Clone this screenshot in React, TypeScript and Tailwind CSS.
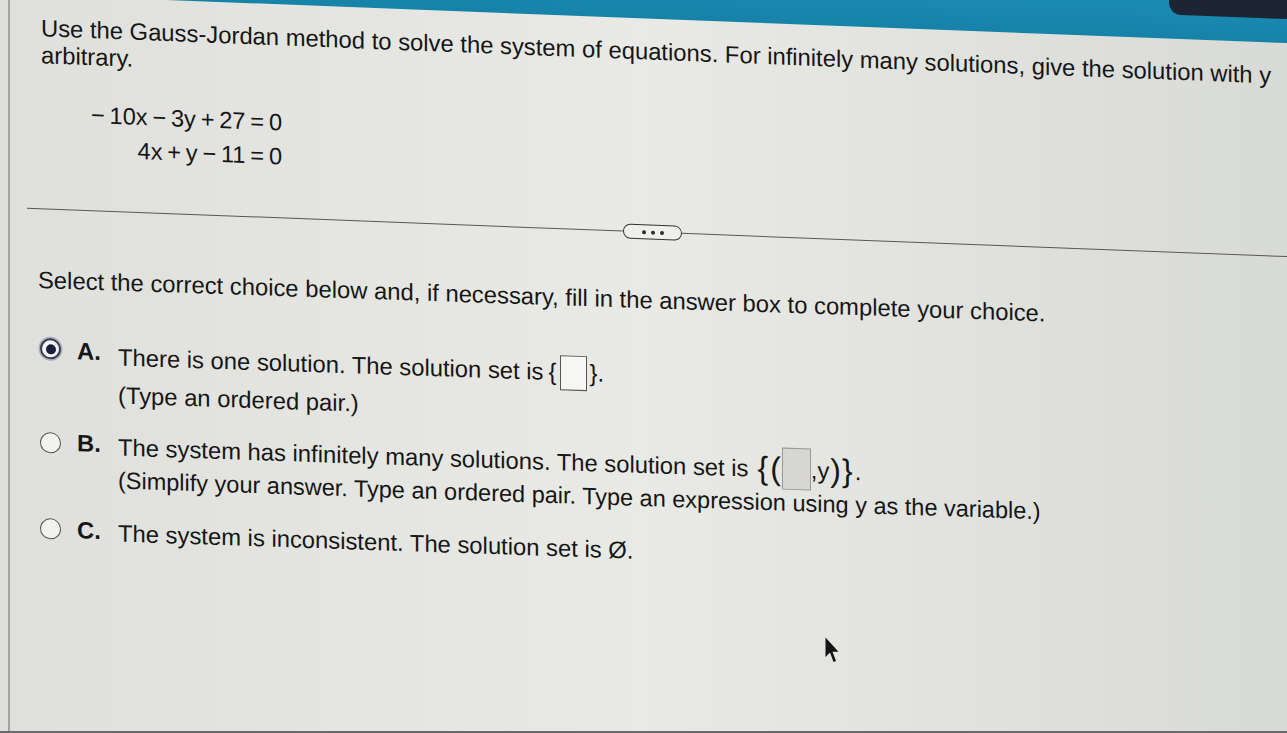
import React from "react";

function Radio({ selected }: { selected?: boolean }) {
  if (selected) {
    return (
      <span className="flex h-[21px] w-[21px] shrink-0 items-center justify-center rounded-full border-2 border-[#3b3d4d] bg-[#f3f3f1] shadow-[0_0_0_1.5px_#a9adbf]">
        <span className="h-[10px] w-[10px] rounded-full bg-[#1b1e3c]" />
      </span>
    );
  }
  return <span className="block h-[21px] w-[21px] shrink-0 rounded-full border-[1.5px] border-[#555] bg-[#f2f2f0]" />;
}

export default function App() {
  return (
    <div className="relative h-[733px] w-[1287px] overflow-hidden border-b-2 border-[#6a6a6a] bg-gradient-to-r from-[#dfe0db] via-[#e9eae5] to-[#d8dad5] font-['Liberation_Sans',Arial,sans-serif] text-[#161616]">
      <div className="ml-[8px] flex h-full flex-col border-l-2 border-[#a2a39f]">
        {/* Top block: header band, question, equations, divider */}
        <div className="-mt-[62px] origin-left skew-y-[2.2deg]">
          <div className="flex h-[56px] justify-end bg-gradient-to-b from-[#1d8fb8] to-[#1782a8]">
            <div className="h-[32px] w-[118px] rounded-bl-[12px] bg-[#1b2533]" />
          </div>
          <div className="pl-[31px] pt-[19px] text-[23.8px] leading-[27px]">
            <p className="whitespace-nowrap">
              Use the Gauss-Jordan method to solve the system of equations. For infinitely many solutions, give the solution with y
            </p>
            <p>arbitrary.</p>
          </div>
          <div className="mt-[28px] flex w-[272px] flex-col items-end text-[23.6px] leading-[34px]">
            <div className="flex gap-[4.8px] whitespace-nowrap">
              <span>−</span>
              <span>10x</span>
              <span>−</span>
              <span>3y</span>
              <span>+</span>
              <span>27</span>
              <span>=</span>
              <span>0</span>
            </div>
            <div className="flex gap-[4.8px] whitespace-nowrap">
              <span>4x</span>
              <span>+</span>
              <span>y</span>
              <span>−</span>
              <span>11</span>
              <span>=</span>
              <span>0</span>
            </div>
          </div>
          <div className="mt-[37px] flex h-[15px] items-center pl-[17px]">
            <div className="h-[1.5px] w-[596px] bg-[#575757]" />
            <div className="flex h-[15px] w-[59px] shrink-0 items-center justify-center gap-[5px] rounded-full border-[1.5px] border-[#333] bg-[#efefeb]">
              <span className="h-[4px] w-[4px] rounded-full bg-[#2d2d2d]" />
              <span className="h-[4px] w-[4px] rounded-full bg-[#2d2d2d]" />
              <span className="h-[4px] w-[4px] rounded-full bg-[#2d2d2d]" />
            </div>
            <div className="h-[1.5px] flex-1 bg-[#575757]" />
          </div>
        </div>

        {/* Lower block: instructions and choices */}
        <div className="origin-left skew-y-[1.9deg] text-[23.8px] leading-[27px]">
          <p className="mt-[50px] whitespace-nowrap pl-[28px]">
            Select the correct choice below and, if necessary, fill in the answer box to complete your choice.
          </p>

          {/* Option A */}
          <div className="mt-[43px] flex items-start pl-[30px]">
            <div className="mt-[2px]">
              <Radio selected />
            </div>
            <span className="ml-[16px] w-[41px] font-bold">A.</span>
            <div className="flex flex-col">
              <div className="flex h-[36px] items-center whitespace-nowrap">
                <span>There is one solution. The solution set is </span>
                <span className="ml-[5px]">{"{"}</span>
                <span className="ml-[4px] mt-[3px] block h-[35px] w-[27px] border-[1.5px] border-[#555] bg-[#f6f6f4]" />
                <span className="ml-[2px]">{"}."}</span>
              </div>
              <span className="mt-[7px]">(Type an ordered pair.)</span>
            </div>
          </div>

          {/* Option B */}
          <div className="mt-[17px] flex items-start pl-[30px]">
            <div className="mt-[9px]">
              <Radio />
            </div>
            <span className="ml-[16px] mt-[5px] w-[41px] font-bold">B.</span>
            <div className="flex flex-col">
              <div className="flex h-[42px] items-center whitespace-nowrap">
                <span>The system has infinitely many solutions. The solution set is</span>
                <span className="ml-[9px] text-[32px] leading-none">{"{"}</span>
                <span className="ml-[2px] text-[32px] leading-none">(</span>
                <span className="ml-[1px] block h-[42px] w-[29px] border border-[#9a9a9a] bg-[#d6d7d4]" />
                <span>,y</span>
                <span className="ml-[1px] text-[32px] leading-none">)</span>
                <span className="ml-[1px] text-[32px] leading-none">{"}"}</span>
                <span className="ml-[2px]">.</span>
              </div>
              <span className="whitespace-nowrap text-[23.5px]">
                (Simplify your answer. Type an ordered pair. Type an expression using y as the variable.)
              </span>
            </div>
          </div>

          {/* Option C */}
          <div className="mt-[25px] flex items-start pl-[30px]">
            <div className="mt-[1px]">
              <Radio />
            </div>
            <span className="-mt-[2px] ml-[16px] w-[41px] font-bold">C.</span>
            <span className="whitespace-nowrap">The system is inconsistent. The solution set is Ø.</span>
          </div>
        </div>
      </div>

      {/* mouse cursor */}
      <svg className="absolute left-[825px] top-[637px]" width="15" height="27" viewBox="0 0 15 27">
        <path d="M0.5 0.5 L0.5 20 L5 15.5 L8.5 25 L11 24 L7.5 14.8 L13.5 14.8 Z" fill="#141414" />
      </svg>
    </div>
  );
}
